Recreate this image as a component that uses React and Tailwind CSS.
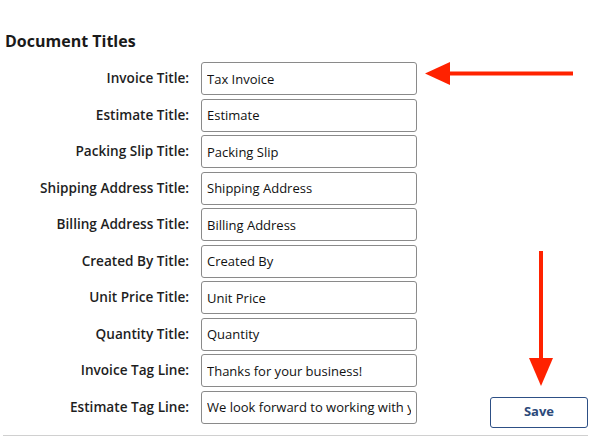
import React from "react";

const rows = [
  ["Invoice Title:", "Tax Invoice"],
  ["Estimate Title:", "Estimate"],
  ["Packing Slip Title:", "Packing Slip"],
  ["Shipping Address Title:", "Shipping Address"],
  ["Billing Address Title:", "Billing Address"],
  ["Created By Title:", "Created By"],
  ["Unit Price Title:", "Unit Price"],
  ["Quantity Title:", "Quantity"],
  ["Invoice Tag Line:", "Thanks for your business!"],
  ["Estimate Tag Line:", "We look forward to working with you!"],
];

export default function App() {
  return (
    <div
      className="relative w-[599px] h-[436px] bg-white overflow-hidden text-[#222]"
      style={{ fontFamily: '"Open Sans", sans-serif' }}
    >
      <div className="pt-[29px] pl-[5px] pr-[11px]">
        <h2 className="text-[16px] font-bold leading-[24px] text-[#1a1a1a]">Document Titles</h2>
        <div className="flex items-end mt-[9px]">
          <div className="flex flex-col gap-[3.5px]">
            {rows.map(([label, value]) => (
              <div key={label} className="flex items-center h-[33px]">
                <div className="w-[184px] text-right text-[13.6px] font-semibold text-[#1e1e1e]">{label}</div>
                <input
                  readOnly
                  value={value}
                  className="ml-[12px] w-[216px] h-[33px] border border-[#8a8a8a] rounded-[3px] px-[5px] text-[13px] text-[#111] outline-none"
                  style={{ fontFamily: '"Open Sans", sans-serif' }}
                />
              </div>
            ))}
          </div>
          <div className="flex-1 flex justify-end">
            <button className="w-[98px] h-[31px] mb-[-4px] border border-[#2d4f85] rounded-[3px] text-[13px] font-bold text-[#2d4a7a] bg-white">
              Save
            </button>
          </div>
        </div>
        <div className="mt-[11px] ml-[-2px] h-[2px] bg-[#d0d0d0]" />
      </div>

      <svg className="absolute left-[424px] top-[61px]" width="152" height="25" viewBox="0 0 152 25">
        <line x1="22" y1="12.5" x2="149" y2="12.5" stroke="#ff2200" strokeWidth="4" />
        <polygon points="1,12.5 26,1 26,24" fill="#ff2200" />
      </svg>
      <svg className="absolute left-[528px] top-[250px]" width="26" height="138" viewBox="0 0 26 138">
        <line x1="13" y1="1" x2="13" y2="112" stroke="#ff2200" strokeWidth="4" />
        <polygon points="1,108 25,108 13,136" fill="#ff2200" />
      </svg>
    </div>
  );
}
